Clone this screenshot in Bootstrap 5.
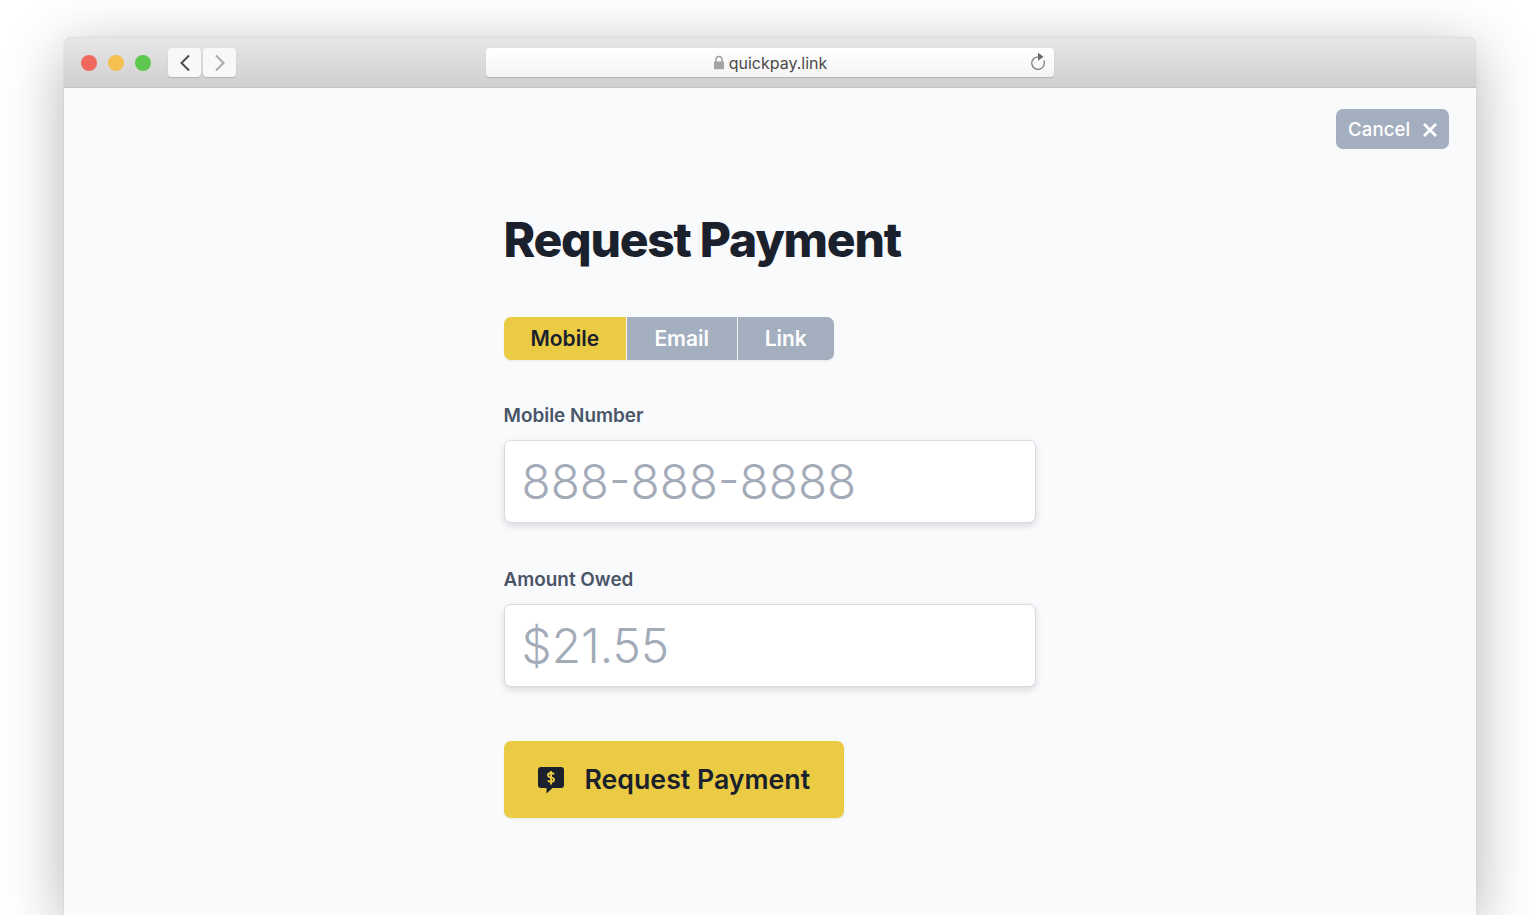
<!DOCTYPE html>
<html lang="en">
<head>
    <title>Request Payment</title>
    <meta name="viewport" content="width=device-width, initial-scale=1">
    <link href="https://cdn.jsdelivr.net/npm/bootstrap@5.3.0/dist/css/bootstrap.min.css" rel="stylesheet">
    <style>
        html, body { height: 100%; }
        body {
            background: #fff;
            overflow: hidden;
            font-family: Inter, "Liberation Sans", sans-serif;
            color: #1a202c;
        }
        .browser-window {
            width: 1412px;
            height: 878px;
            margin: 37px 0 0 64px;
            border-radius: 8px 8px 0 0;
            background: #f9fafc;
            box-shadow: 0 0 1px rgba(0,0,0,.25), 0 14px 60px rgba(0,0,0,.3);
        }
        .title-bar {
            height: 51px;
            padding: 0 22px 0 17px;
            position: relative;
            border-radius: 8px 8px 0 0;
            background: linear-gradient(#e7e7e7, #cfcfcf);
            border-top: 1px solid #dedede;
            border-bottom: 1px solid #c2c2c2;
        }
        .traffic { width: 16px; height: 16px; border-radius: 50%; }
        .traffic-red { background: #f0685e; }
        .traffic-yellow { background: #f6bf4f; }
        .traffic-green { background: #5cc84f; }
        .traffic-lights { gap: 11px; margin-right: 17px; }
        .nav-arrows { column-gap: 2px; }
        .nav-arrow {
            width: 33px;
            height: 29px;
            border-radius: 4px;
            background: #f8f8f8;
            box-shadow: 0 1px 1px rgba(0,0,0,.16);
        }
        .address-bar {
            position: absolute;
            left: 422px;
            top: 10px;
            width: 568px;
            height: 29px;
            border-radius: 4px;
            background: linear-gradient(#ffffff, #f4f4f4);
            box-shadow: 0 1px 1px rgba(0,0,0,.16);
            font-family: Inter, "Liberation Sans", sans-serif;
            font-size: 16px;
            color: #4a4a4a;
        }
        .address-text { padding-top: 1px; }
        .reload-icon { position: absolute; right: 7px; top: 4px; }
        .page-body { padding: 21px 27px 0; }
        .cancel-btn {
            height: 40px;
            width: 113px;
            padding: 1px 12px 0;
            border: 0;
            border-radius: 7px;
            background: #a3aebf;
            color: #fff;
            font-size: 18.6px;
            font-weight: 500;
            letter-spacing: .1px;
        }
        .cancel-btn:hover { background: #a3aebf; color: #fff; }
        .form-column { width: 533px; margin: 0 auto; }
        .page-title {
            margin: 62px 0 0;
            font-size: 48px;
            line-height: 58px;
            font-weight: 800;
            letter-spacing: -1.25px;
            color: #1a202c;
        }
        .method-tabs {
            margin-top: 48px;
            height: 43px;
            width: 330.5px;
            border-radius: 7px;
            overflow: hidden;
            box-shadow: 0 1px 2px rgba(0,0,0,.08);
        }
        .method-tab {
            border: 0;
            padding: 0;
            background: #a3aebf;
            color: #fff;
            font-size: 21px;
            font-weight: 600;
            display: flex;
            align-items: center;
            justify-content: center;
        }
        .method-tab + .method-tab { border-left: 1px solid #f1f3f6; }
        .method-tab.tab-active { background: #ebcb44; color: #1a202c; }
        .tab-mobile { width: 122.5px; }
        .tab-email { width: 110.5px; }
        .tab-link { width: 97.5px; }
        .field-label {
            display: block;
            margin: 0 0 12px;
            font-size: 18.9px;
            line-height: 24px;
            font-weight: 600;
            color: #4a5568;
        }
        .mobile-field { margin-top: 44px; }
        .amount-field { margin-top: 45px; }
        .field-input {
            width: 532.5px;
            height: 83px;
            padding: 0 17px;
            border: 1px solid #d8dbe1;
            border-radius: 7px;
            background: #fff;
            box-shadow: 0 3px 7px rgba(0,0,0,.13);
            font-size: 47.7px;
            font-weight: 300;
            color: #a3abb9;
        }
        .field-input::placeholder { color: #a3abb9; opacity: 1; }
        .field-input:focus { border-color: #d8dbe1; box-shadow: 0 3px 7px rgba(0,0,0,.13); }
        .submit-btn {
            margin-top: 54px;
            width: 340.5px;
            height: 77px;
            padding: 0 33px;
            gap: 20px;
            border: 0;
            border-radius: 7px;
            background: #ebcb44;
            color: #1a202c;
            font-size: 26.7px;
            font-weight: 600;
            box-shadow: 0 1px 2px rgba(0,0,0,.08);
        }
        .submit-btn:hover { background: #ebcb44; color: #1a202c; }
    </style>
</head>
<body>
    <div class="browser-window">
        <!-- Browser chrome -->
        <div class="title-bar d-flex align-items-center">
            <div class="traffic-lights d-flex">
                <span class="traffic traffic-red"></span>
                <span class="traffic traffic-yellow"></span>
                <span class="traffic traffic-green"></span>
            </div>
            <div class="nav-arrows d-flex">
                <span class="nav-arrow d-flex align-items-center justify-content-center">
                    <svg width="12" height="18" viewBox="0 0 12 18" fill="none"><path d="M10 1.5 2.5 9l7.5 7.5" stroke="#4b4b4b" stroke-width="2"/></svg>
                </span>
                <span class="nav-arrow d-flex align-items-center justify-content-center">
                    <svg width="12" height="18" viewBox="0 0 12 18" fill="none"><path d="M2 1.5 9.5 9 2 16.5" stroke="#a8a8a8" stroke-width="2"/></svg>
                </span>
            </div>
            <div class="address-bar d-flex align-items-center justify-content-center gap-1">
                <svg width="12" height="15" viewBox="0 0 12 15"><path d="M1 6.5h10v7a.8.8 0 0 1-.8.8H1.800a.8.8 0 0 1-.8-.8z" fill="#a3a3a3"/><path d="M3 7V4.500a3 3 0 0 1 6 0V7" fill="none" stroke="#a3a3a3" stroke-width="1.500"/></svg>
                <span class="address-text">quickpay.link</span>
                <svg class="reload-icon" width="18" height="20" viewBox="0 0 18 20" fill="none"><path d="M14.800 8.500A6.300 6.300 0 1 1 9 4.800" stroke="#7d7d7d" stroke-width="1.300"/><path d="M9 .8 14.500 4.800 9 8.800z" fill="#6a6a6a"/></svg>
            </div>
        </div>

        <div class="page-body">
            <div class="d-flex justify-content-end">
                <button type="button" class="btn cancel-btn d-flex align-items-center justify-content-between">
                    <span>Cancel</span>
                    <svg width="14" height="14" viewBox="0 0 14 14" fill="none"><path d="M1 1l12 12M13 1 1 13" stroke="#fff" stroke-width="2.800"/></svg>
                </button>
            </div>

            <div class="form-column">
                <h1 class="page-title">Request Payment</h1>

                <div class="method-tabs d-flex">
                    <button type="button" class="method-tab tab-mobile tab-active">Mobile</button>
                    <button type="button" class="method-tab tab-email">Email</button>
                    <button type="button" class="method-tab tab-link">Link</button>
                </div>

                <div class="mobile-field">
                    <label class="field-label" for="mobileNumber">Mobile Number</label>
                    <input id="mobileNumber" type="text" class="form-control field-input" placeholder="888-888-8888">
                </div>

                <div class="amount-field">
                    <label class="field-label" for="amountOwed">Amount Owed</label>
                    <input id="amountOwed" type="text" class="form-control field-input" placeholder="$21.55">
                </div>

                <button type="button" class="btn submit-btn d-flex align-items-center">
                    <svg width="28" height="28" viewBox="0 0 28 28">
                        <path d="M4 1h20a3 3 0 0 1 3 3v15a3 3 0 0 1-3 3H15.500l-6 5.500V22H4a3 3 0 0 1-3-3V4a3 3 0 0 1 3-3z" fill="#1a202c"/>
                        <path d="M17 8.500c-.5-1-1.600-1.500-3-1.500-1.700 0-3 .8-3 2.200 0 3 6 1.400 6 4.400 0 1.400-1.300 2.300-3 2.300-1.500 0-2.600-.5-3.100-1.500M14 5v13.500" fill="none" stroke="#ebcb44" stroke-width="1.900"/>
                    </svg>
                    <span>Request Payment</span>
                </button>
            </div>
        </div>
    </div>

    <script src="https://cdn.jsdelivr.net/npm/bootstrap@5.3.0/dist/js/bootstrap.bundle.min.js"></script>
</body>
</html>
